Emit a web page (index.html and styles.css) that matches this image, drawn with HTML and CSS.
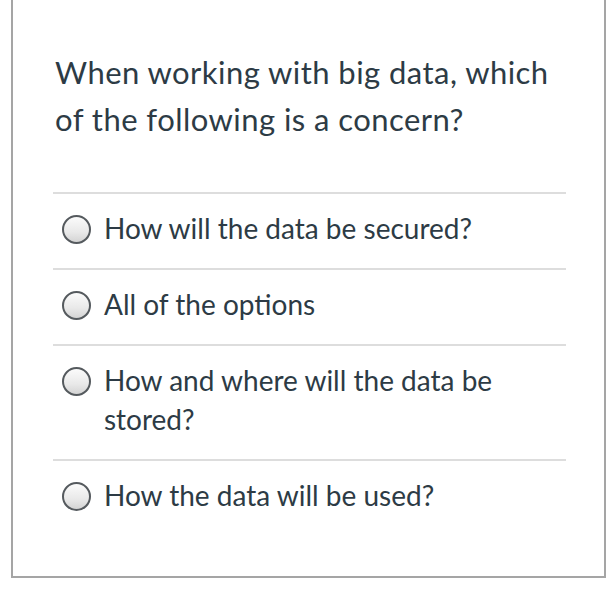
FILE: index.html
```html
<!DOCTYPE html>
<html>
<head>
<meta charset="utf-8">
<link rel="stylesheet" href="styles.css">
</head>
<body>
<div class="card">
  <div class="question">When working with big data, which of the following is a concern?</div>
  <div class="answers">
    <label class="answer"><span class="radio"></span><span class="answer-text">How will the data be secured?</span></label>
    <label class="answer"><span class="radio"></span><span class="answer-text">All of the options</span></label>
    <label class="answer"><span class="radio"></span><span class="answer-text">How and where will the data be stored?</span></label>
    <label class="answer"><span class="radio"></span><span class="answer-text">How the data will be used?</span></label>
  </div>
</div>
</body>
</html>
```
FILE: styles.css
```css
html, body {
  margin: 0;
  padding: 0;
  background: #ffffff;
}
body {
  font-family: Lato, "Open Sans", sans-serif;
  color: #2d3b45;
}
.card {
  box-sizing: border-box;
  margin-left: 11px;
  width: 595px;
  height: 578px;
  border: 2px solid #a5a5a5;
  border-top: none;
  padding: 0 38px 0 40px;
}
.question {
  font-size: 31px;
  letter-spacing: 0.45px;
  line-height: 47px;
  padding: 49px 2px 0 2px;
  margin-bottom: 49px;
}
.answer {
  display: flex;
  align-items: flex-start;
  border-top: 2px solid #dddddd;
  padding: 15px 0 20px 9px;
  font-size: 28px;
  line-height: 39px;
}
.radio {
  flex: none;
  box-sizing: border-box;
  width: 29px;
  height: 29px;
  margin-top: 6px;
  margin-right: 13px;
  border: 2px solid #555a5e;
  border-radius: 50%;
  background: linear-gradient(to bottom, #fbfbfb 0%, #e9e9e9 60%, #d4d4d4 100%);
}
.answer-text {
  max-width: 440px;
}
```
